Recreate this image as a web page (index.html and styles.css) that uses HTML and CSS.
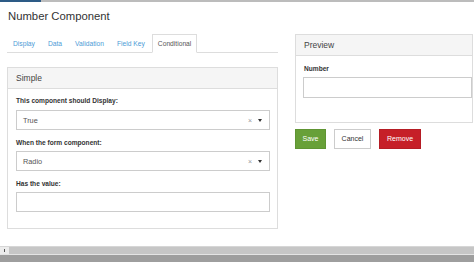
FILE: index.html
```html
<!DOCTYPE html>
<html>
<head>
<meta charset="utf-8">
<link rel="stylesheet" href="styles.css">
</head>
<body>
<div class="topbar"><div class="topbar-accent"></div></div>
<h1 class="title">Number Component</h1>
<div class="content">
  <div class="left-col">
    <ul class="tabs">
      <li class="tab">Display</li>
      <li class="tab">Data</li>
      <li class="tab">Validation</li>
      <li class="tab">Field Key</li>
      <li class="tab active">Conditional</li>
    </ul>
    <div class="panel simple">
      <div class="panel-heading">Simple</div>
      <div class="panel-body">
        <label class="field-label first">This component should Display:</label>
        <div class="select">
          <span class="select-value">True</span>
          <span class="select-clear">×</span>
          <span class="select-caret"></span>
        </div>
        <label class="field-label">When the form component:</label>
        <div class="select">
          <span class="select-value">Radio</span>
          <span class="select-clear">×</span>
          <span class="select-caret"></span>
        </div>
        <label class="field-label">Has the value:</label>
        <div class="input"></div>
      </div>
    </div>
  </div>
  <div class="right-col">
    <div class="panel preview">
      <div class="panel-heading">Preview</div>
      <div class="panel-body preview-body">
        <label class="field-label first">Number</label>
        <div class="input"></div>
      </div>
    </div>
    <div class="buttons">
      <button class="btn btn-save">Save</button>
      <button class="btn btn-cancel">Cancel</button>
      <button class="btn btn-remove">Remove</button>
    </div>
  </div>
</div>
<div class="footer">
  <div class="hscroll"><div class="hscroll-btn"><span class="hscroll-dot"></span></div></div>
  <div class="footer-sep"></div>
  <div class="footer-bottom"></div>
</div>
</body>
</html>
```

FILE: styles.css
```css
* { box-sizing: border-box; }
html, body { margin: 0; padding: 0; }
body {
  width: 474px;
  height: 262px;
  overflow: hidden;
  background: #ffffff;
  font-family: "Liberation Sans", Arial, sans-serif;
  color: #333333;
  display: flex;
  flex-direction: column;
}
.topbar {
  height: 2px;
  background: #bcbcbc;
  flex: none;
}
.topbar-accent {
  width: 41px;
  height: 2px;
  background: #2d5b86;
}
.title {
  margin: 0;
  padding: 6px 0 0 8px;
  font-size: 11.3px;
  line-height: 16px;
  font-weight: normal;
  color: #333333;
  flex: none;
}
.content {
  display: flex;
  gap: 17px;
  padding-left: 7px;
  margin-top: 10px;
  flex: none;
}
.left-col { width: 271px; }
.right-col { width: 178px; }
.tabs {
  list-style: none;
  margin: 0;
  padding: 0;
  display: flex;
  gap: 1px;
  height: 19px;
  border-bottom: 1px solid #dddddd;
}
.tab {
  padding: 0 5px;
  font-size: 6.7px;
  line-height: 17px;
  color: #4d9bd6;
  border: 1px solid transparent;
}
.tab.active {
  color: #555555;
  border-color: #dddddd;
  border-bottom-color: #ffffff;
  background: #ffffff;
  height: 19px;
}
.panel {
  border: 1px solid #dddddd;
  background: #ffffff;
}
.simple { margin-top: 14px; }
.panel-heading {
  height: 21px;
  background: #f5f5f5;
  border-bottom: 1px solid #dddddd;
  padding-left: 8px;
  font-size: 8.5px;
  line-height: 20px;
  color: #444444;
}
.panel-body {
  padding: 0 7px 16px 8px;
}
.field-label {
  display: block;
  font-size: 6.6px;
  font-weight: bold;
  line-height: 10px;
  color: #333333;
  margin-top: 8px;
}
.field-label.first { margin-top: 7px; }
.select {
  margin-top: 3px;
  height: 20px;
  border: 1px solid #cccccc;
  display: flex;
  align-items: center;
  padding: 0 7px 0 6px;
}
.field-label.first + .select { margin-top: 4px; }
.select-value {
  flex: 1;
  font-size: 7.3px;
  color: #555555;
}
.select-clear {
  font-size: 7px;
  color: #999999;
  margin-right: 6px;
}
.select-caret {
  width: 0;
  height: 0;
  border-left: 2.5px solid transparent;
  border-right: 2.5px solid transparent;
  border-top: 3px solid #333333;
}
.input {
  margin-top: 3px;
  height: 20px;
  border: 1px solid #cccccc;
  background: #ffffff;
}
.preview-body {
  padding: 0 0 24px 7px;
}
.preview .field-label.first { margin-top: 8px; padding-left: 1px; }
.preview .input { height: 21px; margin-top: 3px; }
.buttons {
  display: flex;
  gap: 8px;
  margin-top: 6px;
}
.btn {
  height: 20px;
  border: 1px solid transparent;
  font-family: "Liberation Sans", Arial, sans-serif;
  font-size: 7px;
  padding: 0;
  margin: 0;
  line-height: 18px;
  cursor: pointer;
}
.btn-save { width: 31px; background: #68a038; border-color: #5f9433; color: #ffffff; }
.btn-cancel { width: 37px; background: #ffffff; border-color: #cccccc; color: #333333; }
.btn-remove { width: 42px; background: #c61f28; border-color: #b51c24; color: #ffffff; }
.footer {
  margin-top: auto;
  flex: none;
}
.hscroll {
  height: 8px;
  background: #c6c6c6;
  border-top: 1px solid #d6d6d6;
}
.hscroll-btn {
  width: 9px;
  height: 7px;
  background: #ececec;
  display: flex;
  align-items: center;
  justify-content: center;
}
.hscroll-dot {
  width: 1px;
  height: 3px;
  background: #555555;
}
.footer-sep { height: 1px; background: #e4e4e4; }
.footer-bottom { height: 7px; background: #9e9e9e; }
```
